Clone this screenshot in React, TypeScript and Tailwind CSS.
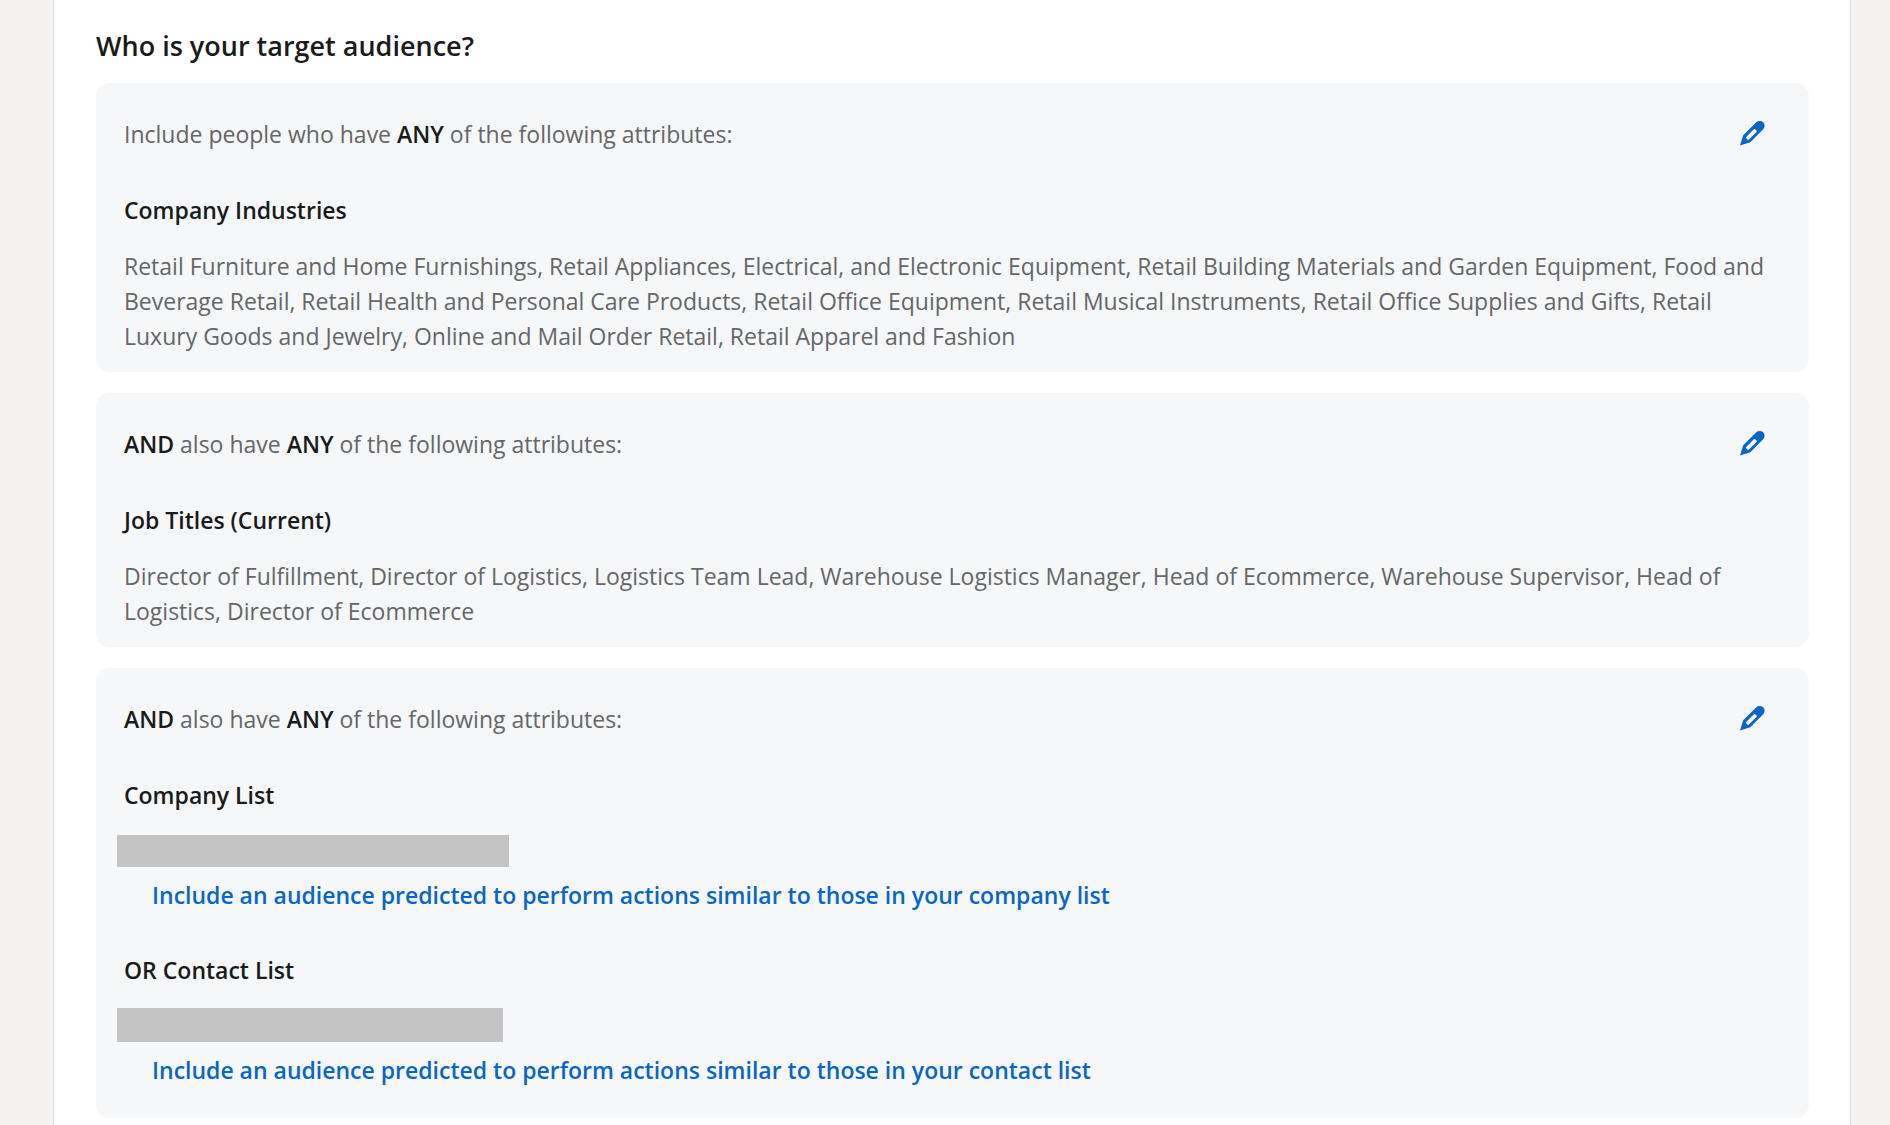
import * as React from "react";

interface Attribute {
  label: string;
  values?: string;
  // redacted lists only show a placeholder bar and an expansion link
  barClass?: string;
  expandText?: string;
}

interface AudienceGroup {
  id: string;
  first?: boolean;
  attributes: Attribute[];
}

const GROUPS: AudienceGroup[] = [
  {
    id: "industries",
    first: true,
    attributes: [
      {
        label: "Company Industries",
        values:
          "Retail Furniture and Home Furnishings, Retail Appliances, Electrical, and Electronic Equipment, Retail Building Materials and Garden Equipment, Food and Beverage Retail, Retail Health and Personal Care Products, Retail Office Equipment, Retail Musical Instruments, Retail Office Supplies and Gifts, Retail Luxury Goods and Jewelry, Online and Mail Order Retail, Retail Apparel and Fashion",
      },
    ],
  },
  {
    id: "titles",
    attributes: [
      {
        label: "Job Titles (Current)",
        values:
          "Director of Fulfillment, Director of Logistics, Logistics Team Lead, Warehouse Logistics Manager, Head of Ecommerce, Warehouse Supervisor, Head of Logistics, Director of Ecommerce",
      },
    ],
  },
  {
    id: "lists",
    attributes: [
      {
        label: "Company List",
        barClass: "h-8 w-[392px]",
        expandText: "Include an audience predicted to perform actions similar to those in your company list",
      },
      {
        label: "OR Contact List",
        barClass: "h-[34px] w-[386px]",
        expandText: "Include an audience predicted to perform actions similar to those in your contact list",
      },
    ],
  },
];

function PencilIcon() {
  return (
    <svg viewBox="-2 -2 32 32" className="h-8 w-8" fill="currentColor" fillRule="evenodd" aria-hidden="true">
      <path d="M2 26.5 5.2 16.2 18.3 3.3a5 5 0 0 1 6.9 0 5 5 0 0 1 0 6.9L12.3 23.3ZM8.2 17.9a1 1 0 0 0 0 1.4l1.3 1.3a1 1 0 0 0 1.4 0l7.6-7.6a1 1 0 0 0 0-1.4l-1.3-1.3a1 1 0 0 0-1.4 0Z" />
    </svg>
  );
}

function Strong({ children }: { children: React.ReactNode }) {
  return <strong className="font-semibold text-[#1a1a1a]">{children}</strong>;
}

function AttributeBlock({ attribute }: { attribute: Attribute }) {
  return (
    <div>
      <h3 className="font-semibold text-[#1a1a1a]">{attribute.label}</h3>
      {attribute.values && <p className="mt-[21px]">{attribute.values}</p>}
      {attribute.barClass && (
        <div className="-ml-[7px] mt-5 flex h-[34px] items-end">
          <div className={`bg-[#c3c3c3] ${attribute.barClass}`} />
        </div>
      )}
      {attribute.expandText && (
        <div className="mt-[11px] pl-7">
          <a href="#" className="font-semibold text-[#0a66c2]">
            {attribute.expandText}
          </a>
        </div>
      )}
    </div>
  );
}

function GroupCard({ group }: { group: AudienceGroup }) {
  return (
    <section className={`rounded-[14px] bg-[#f5f7f9] pl-7 pr-9 pt-[34px] ${group.id === "lists" ? "pb-[30px]" : "pb-[18px]"}`}>
      <div className="flex items-start justify-between">
        <p>
          {group.first ? (
            <>
              Include people who have <Strong>ANY</Strong> of the following attributes:
            </>
          ) : (
            <>
              <Strong>AND</Strong> also have <Strong>ANY</Strong> of the following attributes:
            </>
          )}
        </p>
        <button type="button" aria-label="Edit attributes" className="mr-[5px] text-[#0a66c2]">
          <PencilIcon />
        </button>
      </div>
      <div className="mt-[41px] flex flex-col gap-10">
        {group.attributes.map((attribute) => (
          <AttributeBlock key={attribute.label} attribute={attribute} />
        ))}
      </div>
    </section>
  );
}

export default function App() {
  return (
    <div className="min-h-screen bg-[#f3f2f0] pl-[53px] pr-[39px] font-['Segoe_UI','Open_Sans',sans-serif]">
      <main className="min-h-screen border-x border-[#e6e6e5] bg-white pb-[7px] pl-[42px] pr-[41px] pt-[26px]">
        <h2 className="text-[27px] leading-10 font-semibold text-[#1a1a1a]">Who is your target audience?</h2>
        <div className="mt-[17px] flex flex-col gap-[21px] text-[23px] leading-[35px] text-[#666666]">
          {GROUPS.map((group) => (
            <GroupCard key={group.id} group={group} />
          ))}
        </div>
      </main>
    </div>
  );
}
